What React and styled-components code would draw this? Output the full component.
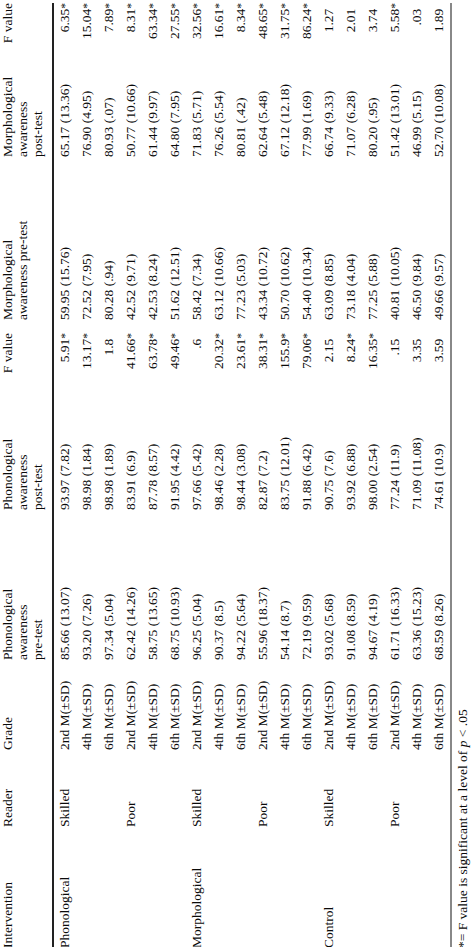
import React from "react";
import styled, { createGlobalStyle } from "styled-components";

const Global = createGlobalStyle`
  html, body { margin: 0; padding: 0; background: #fff; }
  body { width: 474px; height: 947px; overflow: hidden; }
`;

const COLS = "121px 77px 90px 150px 103px 74px 176px 90px 64px";

const Viewport = styled.div`
  width: 474px;
  height: 947px;
  overflow: hidden;
  background: #fff;
`;

// the printed table is turned a quarter turn, so it is laid out 947 wide
const Sheet = styled.div`
  width: 947px;
  height: 474px;
  transform-origin: 0 0;
  transform: translateY(947px) rotate(-90deg);
  font-family: "Liberation Serif", "Times New Roman", serif;
  font-size: 13.5px;
  color: #0a0a0a;
`;

const Table = styled.div`
  margin-left: -1px;
  width: 945px;
`;

const HeadRow = styled.div`
  display: grid;
  grid-template-columns: ${COLS};
  height: 52px;
  border-bottom: 2px solid #222;
  line-height: 15px;
`;

const Row = styled.div`
  display: grid;
  grid-template-columns: ${COLS};
  height: 22px;
  line-height: 22px;
`;

const Body = styled.div`
  border-bottom: 2px solid #888;
`;

const Cell = styled.div`
  white-space: nowrap;
  text-align: ${(p) => (p.$right ? "right" : "left")};
  padding-left: ${(p) => p.$pad || 0}px;
`;

const Star = styled.span`
  font-size: 0.85em;
  visibility: ${(p) => (p.$ghost ? "hidden" : "visible")};
`;

const Note = styled.div`
  padding-top: 3px;
  line-height: 15px;
  white-space: nowrap;
`;

const Italic = styled.i`
  font-style: italic;
`;

const head = [
  ["Intervention"],
  ["Reader"],
  ["Grade"],
  ["Phonological", "awareness", "pre-test"],
  ["Phonological", "awareness", "post-test"],
  ["F value"],
  ["Morphological", "awareness pre-test"],
  ["Morphological", "awareness", "post-test"],
  ["F value"],
];

const groups = [
  {
    name: "Phonological",
    readers: [
      {
        name: "Skilled",
        rows: [
          ["85.66 (13.07)", "93.97 (7.82)", "5.91*", "59.95 (15.76)", "65.17 (13.36)", "6.35*"],
          ["93.20 (7.26)", "98.98 (1.84)", "13.17*", "72.52 (7.95)", "76.90 (4.95)", "15.04*"],
          ["97.34 (5.04)", "98.98 (1.89)", "1.8", "80.28 (.94)", "80.93 (.07)", "7.89*"],
        ],
      },
      {
        name: "Poor",
        rows: [
          ["62.42 (14.26)", "83.91 (6.9)", "41.66*", "42.52 (9.71)", "50.77 (10.66)", "8.31*"],
          ["58.75 (13.65)", "87.78 (8.57)", "63.78*", "42.53 (8.24)", "61.44 (9.97)", "63.34*"],
          ["68.75 (10.93)", "91.95 (4.42)", "49.46*", "51.62 (12.51)", "64.80 (7.95)", "27.55*"],
        ],
      },
    ],
  },
  {
    name: "Morphological",
    readers: [
      {
        name: "Skilled",
        rows: [
          ["96.25 (5.04)", "97.66 (5.42)", ".6", "58.42 (7.34)", "71.83 (5.71)", "32.56*"],
          ["90.37 (8.5)", "98.46 (2.28)", "20.32*", "63.12 (10.66)", "76.26 (5.54)", "16.61*"],
          ["94.22 (5.64)", "98.44 (3.08)", "23.61*", "77.23 (5.03)", "80.81 (.42)", "8.34*"],
        ],
      },
      {
        name: "Poor",
        rows: [
          ["55.96 (18.37)", "82.87 (7.2)", "38.31*", "43.34 (10.72)", "62.64 (5.48)", "48.65*"],
          ["54.14 (8.7)", "83.75 (12.01)", "155.9*", "50.70 (10.62)", "67.12 (12.18)", "31.75*"],
          ["72.19 (9.59)", "91.88 (6.42)", "79.06*", "54.40 (10.34)", "77.99 (1.69)", "86.24*"],
        ],
      },
    ],
  },
  {
    name: "Control",
    readers: [
      {
        name: "Skilled",
        rows: [
          ["93.02 (5.68)", "90.75 (7.6)", "2.15", "63.09 (8.85)", "66.74 (9.33)", "1.27"],
          ["91.08 (8.59)", "93.92 (6.88)", "8.24*", "73.18 (4.04)", "71.07 (6.28)", "2.01"],
          ["94.67 (4.19)", "98.00 (2.54)", "16.35*", "77.25 (5.88)", "80.20 (.95)", "3.74"],
        ],
      },
      {
        name: "Poor",
        rows: [
          ["61.71 (16.33)", "77.24 (11.9)", ".15", "40.81 (10.05)", "51.42 (13.01)", "5.58*"],
          ["63.36 (15.23)", "71.09 (11.08)", "3.35", "46.50 (9.84)", "46.99 (5.15)", ".03"],
          ["68.59 (8.26)", "74.61 (10.9)", "3.59", "49.66 (9.57)", "52.70 (10.08)", "1.89"],
        ],
      },
    ],
  },
];

const grades = ["2nd", "4th", "6th"];

function FValue({ v }) {
  const sig = v.endsWith("*");
  return (
    <Cell $right>
      {sig ? v.slice(0, -1) : v}
      <Star $ghost={!sig}>*</Star>
    </Cell>
  );
}

function DataRow({ group, reader, grade, values }) {
  const [pre1, post1, f1, pre2, post2, f2] = values;
  return (
    <Row>
      <Cell>{group}</Cell>
      <Cell>{reader}</Cell>
      <Cell>{grade} M(±SD)</Cell>
      <Cell>{pre1}</Cell>
      <Cell>{post1}</Cell>
      <FValue v={f1} />
      <Cell $pad={13}>{pre2}</Cell>
      <Cell>{post2}</Cell>
      <FValue v={f2} />
    </Row>
  );
}

export default function App() {
  return (
    <Viewport>
      <Global />
      <Sheet>
        <Table>
          <HeadRow>
            {head.map((lines, i) => (
              <Cell key={i} $right={i === 5 || i === 8} $pad={i === 6 ? 13 : 0}>
                {lines.map((l, j) => (
                  <div key={j}>{l}</div>
                ))}
              </Cell>
            ))}
          </HeadRow>
          <Body>
            {groups.map((g) =>
              g.readers.map((r, ri) =>
                r.rows.map((vals, k) => (
                  <DataRow
                    key={g.name + r.name + k}
                    group={ri === 0 && k === 0 ? g.name : ""}
                    reader={k === 0 ? r.name : ""}
                    grade={grades[k]}
                    values={vals}
                  />
                ))
              )
            )}
          </Body>
          <Note>
            *= F value is significant at a level of <Italic>p</Italic> &lt; .05
          </Note>
        </Table>
      </Sheet>
    </Viewport>
  );
}
